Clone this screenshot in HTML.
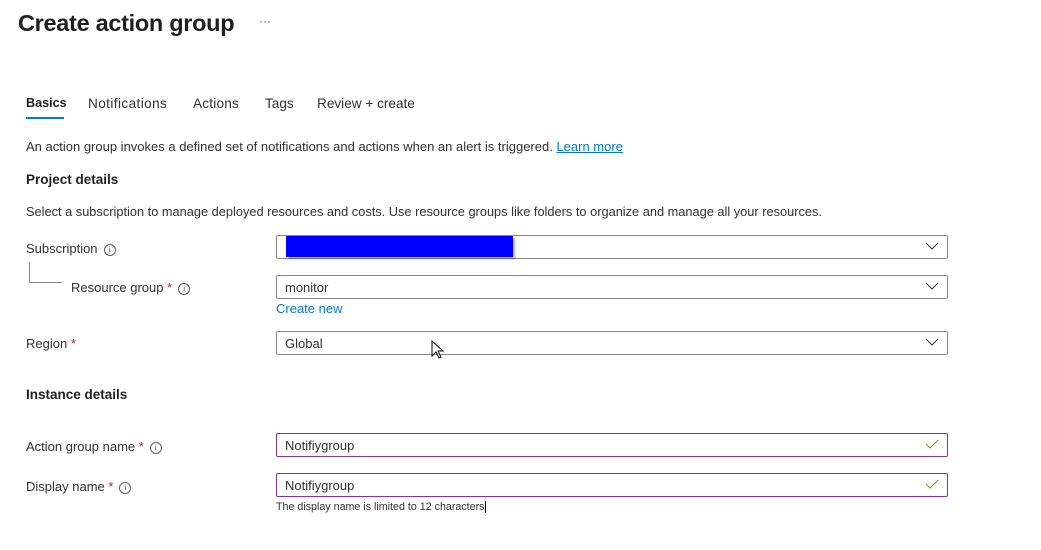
<!DOCTYPE html>
<html><head><meta charset="utf-8"><style>
body{margin:0;width:1041px;height:550px;background:#fff;font-family:"Liberation Sans",sans-serif;color:#323130;position:relative;overflow:hidden}
.a{position:absolute;white-space:nowrap}
.t{font-size:13px}
.box{position:absolute;left:276px;width:670px;height:22px;border:1px solid #8a8886;border-radius:2px;background:#fff}
.box span{position:absolute;left:8px;top:4px;font-size:13px}
.chev{position:absolute;right:8px;top:5px}
.p{border-color:#8a2da5}
.req{color:#a4262c}
.info{display:inline-block;width:10px;height:10px;border:1px solid #605e5c;border-radius:50%;font-size:8px;line-height:10px;text-align:center;color:#605e5c;vertical-align:middle;margin-left:6px;font-family:"Liberation Serif",serif}
</style></head><body>
<div class="a" style="left:18px;top:10px;font-size:23.5px;font-weight:600;color:#201f1e;letter-spacing:-0.3px">Create action group</div>
<div class="a" style="left:259px;top:14px;font-size:12px;color:#605e5c">···</div>

<div class="a" style="left:26px;top:96px;font-size:12.6px;font-weight:600;color:#201f1e">Basics</div>
<div class="a" style="left:26px;top:117px;width:38px;height:2px;background:#0078d4"></div>
<div class="a" style="left:88px;top:96px;font-size:13.6px;letter-spacing:0.4px">Notifications</div>
<div class="a" style="left:193px;top:96px;font-size:13.6px;letter-spacing:0.2px">Actions</div>
<div class="a" style="left:265px;top:96px;font-size:13.6px">Tags</div>
<div class="a" style="left:317px;top:96px;font-size:13.6px">Review + create</div>

<div class="a" style="left:26px;top:139px;font-size:13px">An action group invokes a defined set of notifications and actions when an alert is triggered. <span style="color:#0078d4;text-decoration:underline">Learn more</span></div>
<div class="a t" style="left:26px;top:172px;font-weight:600;color:#201f1e;font-size:13.5px">Project details</div>
<div class="a" style="left:26px;top:204px;font-size:12.8px">Select a subscription to manage deployed resources and costs. Use resource groups like folders to organize and manage all your resources.</div>

<div class="a t" style="left:26px;top:241px">Subscription<span class="info">i</span></div>
<div class="a" style="left:29px;top:262px;width:32px;height:20px;border-left:1px solid #8a8886;border-bottom:1px solid #8a8886"></div>
<div class="a t" style="left:71px;top:280px">Resource group <span class="req">*</span><span class="info">i</span></div>
<div class="a t" style="left:26px;top:336px">Region <span class="req">*</span></div>
<div class="a t" style="left:26px;top:387px;font-weight:600;color:#201f1e;font-size:13.5px">Instance details</div>
<div class="a t" style="left:26px;top:439px">Action group name <span class="req">*</span><span class="info">i</span></div>
<div class="a t" style="left:26px;top:479px">Display name <span class="req">*</span><span class="info">i</span></div>

<div class="box" style="top:235px"><svg class="chev" width="14" height="10"><path d="M1 2l6 6 6-6" fill="none" stroke="#323130"/></svg></div>
<div class="a" style="left:286px;top:236px;width:227px;height:21px;background:#0000ff;box-shadow:2px 2px 2px rgba(0,0,0,.3)"></div>
<div class="box" style="top:275px"><span>monitor</span><svg class="chev" width="14" height="10"><path d="M1 2l6 6 6-6" fill="none" stroke="#323130"/></svg></div>
<div class="a t" style="left:276px;top:301px;color:#0078d4">Create new</div>
<div class="box" style="top:331px"><span>Global</span><svg class="chev" width="14" height="10"><path d="M1 2l6 6 6-6" fill="none" stroke="#323130"/></svg></div>
<svg class="a" style="left:431px;top:340px" width="14" height="20"><path d="M1 1v15l4-4 3 6 2-1-3-6h5z" fill="#fff" stroke="#000"/></svg>
<div class="box p" style="top:433px"><span>Notifiygroup</span><svg class="chev" width="14" height="10"><path d="M1 5l4 4 8-8" fill="none" stroke="#57a300"/></svg></div>
<div class="box p" style="top:473px"><span>Notifiygroup</span><svg class="chev" width="14" height="10"><path d="M1 5l4 4 8-8" fill="none" stroke="#57a300"/></svg></div>
<div class="a" style="left:276px;top:501px;font-size:10.7px;color:#323130">The display name is limited to 12 characters<span style="display:inline-block;width:1px;height:12px;background:#000;vertical-align:middle"></span></div>
</body></html>
